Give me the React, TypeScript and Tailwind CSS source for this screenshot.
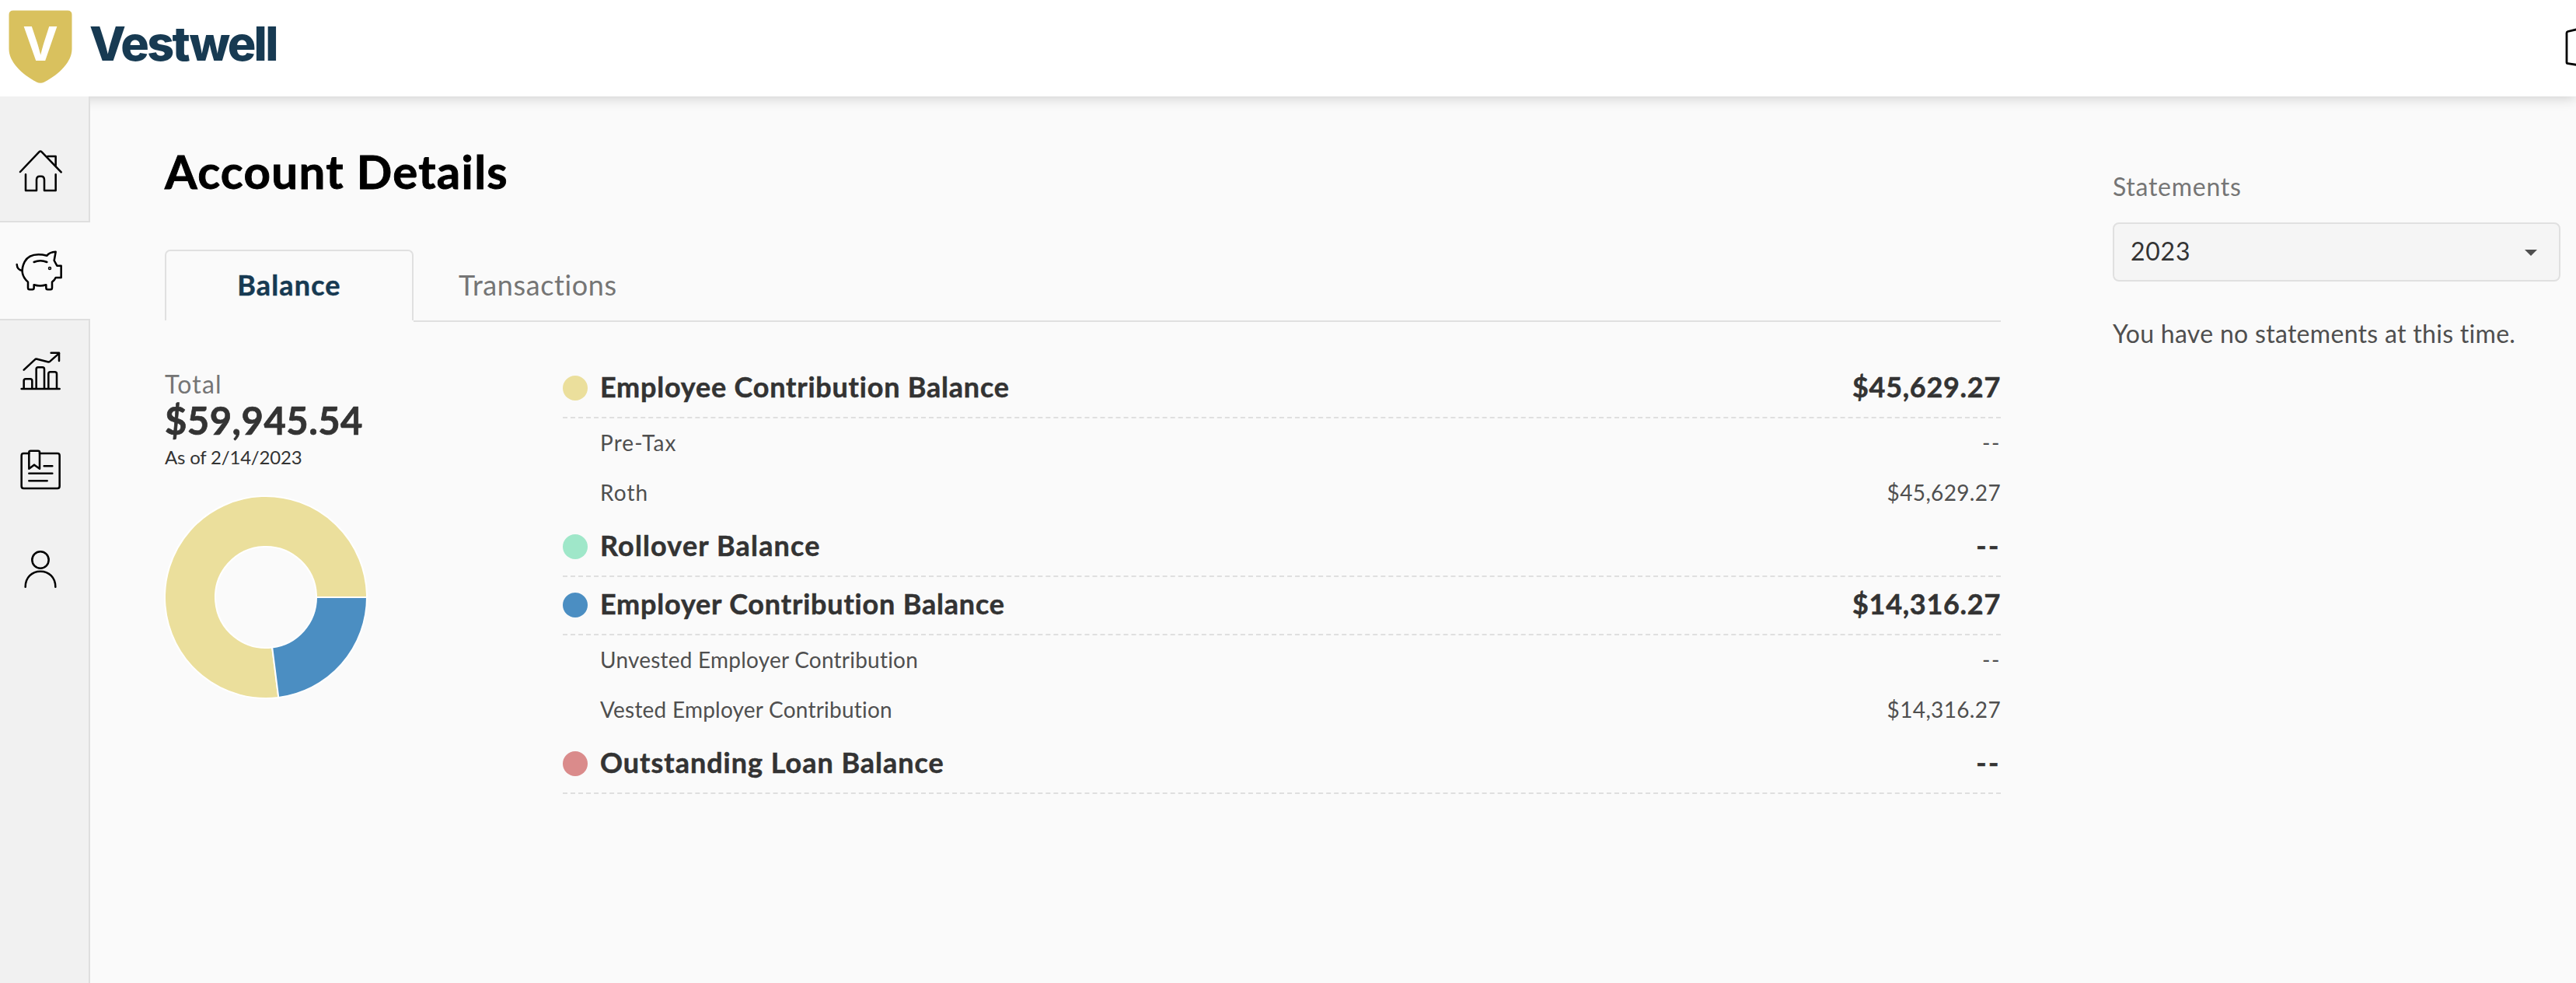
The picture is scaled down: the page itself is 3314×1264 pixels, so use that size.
import type { ReactNode } from "react";

const stroke = {
  fill: "none",
  stroke: "#000",
  strokeWidth: 7.6,
  strokeLinecap: "round" as const,
  strokeLinejoin: "round" as const,
};

function HomeIcon() {
  return (
    <svg width="56" height="56" viewBox="0 0 168 168" {...stroke}>
      <path d="M6 87 L79 10 Q84 5 89 10 L164 88" />
      <path d="M112 27 H143 V62" />
      <path d="M27 97 V159 H69 V118 Q69 104 81 104 H87 Q99 104 99 118 V159 H143 V97" />
    </svg>
  );
}

function PiggyIcon() {
  return (
    <svg width="60" height="56" viewBox="0 0 180 168" {...stroke}>
      <path d="M5 60 C6 75 12 82 26 84" />
      <path d="M155 11 C140 12 128 16 121 26 C85 18 50 22 35 50 C20 80 25 108 48 128 V150 Q48 157 54 157 H65 Q71 157 71 150 V139 Q95 146 118 139 V150 Q118 157 124 157 H135 Q141 157 141 150 V128 Q150 122 155 111 H176 V65 H160 L149 45 Z" />
      <path d="M71 51 Q96 40 121 51" />
      <circle cx="132" cy="75" r="4.5" strokeWidth="4.5" />
    </svg>
  );
}

function ChartIcon() {
  return (
    <svg width="52" height="52" viewBox="0 0 156 156" {...stroke}>
      <path d="M5 147 H152" />
      <path d="M14 146 V116 Q14 109 21 109 H39 Q46 109 46 116 V146" />
      <path d="M62 146 V71 Q62 64 69 64 H86 Q93 64 93 71 V146" />
      <path d="M109 146 V89 Q109 82 116 82 H133 Q141 82 141 89 V146" />
      <path d="M14 74 L56 35 Q60 31 65 32 L106 43 Q111 44 115 41 L150 10" />
      <path d="M119 8 H150 V39" />
    </svg>
  );
}

function StatementIcon() {
  return (
    <svg width="52" height="53" viewBox="0 0 156 159" {...stroke}>
      <path d="M34 18 H13 Q5 18 5 26 V145 Q5 153 13 153 H144 Q152 153 152 145 V26 Q152 18 144 18 H75" />
      <path d="M34 77 V14 Q34 8 40 8 H69 Q75 8 75 14 V77 L54 62 Z" />
      <path d="M92 67 H124 M34 95 H124 M34 124 H104" />
    </svg>
  );
}

function PersonIcon() {
  return (
    <svg width="44" height="52" viewBox="0 0 132 156" {...stroke}>
      <circle cx="66" cy="42" r="32" />
      <path d="M8 146 C8 110 33 86 66 86 C99 86 124 110 124 146" />
    </svg>
  );
}

function Header() {
  return (
    <header className="relative flex h-[124px] items-start justify-between bg-white shadow-[0_2px_16px_rgba(0,0,0,0.18)]">
      <div className="flex items-start pl-[11px] pt-[13px] font-['Inter',sans-serif]">
        <div className="relative flex h-[94px] w-[82px] justify-center">
          <svg className="absolute inset-0" width="82" height="94" viewBox="0 0 82 94">
            <path
              d="M6 0.5 H76 Q81.5 0.5 81.5 6 V50 C81.5 66 66 82 46 92.5 Q41 95 36 92.5 C16 82 0.5 66 0.5 50 V6 Q0.5 0.5 6 0.5 Z"
              fill="#d9c15e"
            />
          </svg>
          <span className="relative text-[61px] font-bold leading-[86px] text-white">V</span>
        </div>
        <span className="ml-[22px] text-[61px] font-extrabold leading-[86px] tracking-[-2.7px] text-[#173a52]">
          Vestwell
        </span>
      </div>
      <svg className="mt-[34px]" width="14" height="54" viewBox="0 0 14 54" fill="none" stroke="#000" strokeWidth="2.8">
        <path d="M16 3.5 L3.5 6.5 Q2 7 2 8.5 V46 Q2 47.500 3.5 47.700 L16 49.500" />
      </svg>
    </header>
  );
}

function Sidebar() {
  return (
    <nav className="relative z-10 flex w-[116px] shrink-0 flex-col bg-[#fafafa]">
      <div className="h-[162px] border-b-2 border-r-2 border-[#dfdfdf] bg-[#f1f1f1] pl-6 pt-[68px]">
        <HomeIcon />
      </div>
      <div className="h-[124px] pl-5 pt-[34px]">
        <PiggyIcon />
      </div>
      <div className="flex flex-1 flex-col border-r-2 border-t-2 border-[#dfdfdf] bg-[#f1f1f1]">
        <div className="h-[126px] pl-[26px] pt-[39px]">
          <ChartIcon />
        </div>
        <div className="h-[126px] pl-[26px] pt-[39px]">
          <StatementIcon />
        </div>
        <div className="h-[126px] pl-[30px] pt-[42px]">
          <PersonIcon />
        </div>
      </div>
    </nav>
  );
}

function Donut() {
  const c = 131;
  const R = 130;
  const r = 65;
  const a = (82.8 * Math.PI) / 180;
  const p = (q: number, t: number) => `${c + q * Math.cos(t)} ${c + q * Math.sin(t)}`;
  return (
    <svg width="262" height="262" viewBox="0 0 262 262" stroke="#fff" strokeWidth="2">
      <path
        fill="#ebdf9c"
        d={`M${p(R, a)} A${R} ${R} 0 1 1 ${p(R, 0)} L${p(r, 0)} A${r} ${r} 0 1 0 ${p(r, a)} Z`}
      />
      <path
        fill="#4b8ec2"
        d={`M${p(R, 0)} A${R} ${R} 0 0 1 ${p(R, a)} L${p(r, a)} A${r} ${r} 0 0 0 ${p(r, 0)} Z`}
      />
    </svg>
  );
}

function BalanceHeader({ dot, label, amount }: { dot: string; label: ReactNode; amount: string }) {
  return (
    <div className="flex h-[75px] items-start pt-5 text-[36px] font-bold leading-[28px] text-[#333] [-webkit-text-stroke:0.5px_#333]">
      <span className={`mr-4 size-8 rounded-full ${dot}`} />
      {label}
      <span className={amount === "--" ? "ml-auto tracking-[2.5px]" : "ml-auto tracking-[0.7px]"}>{amount}</span>
    </div>
  );
}

function DashedRule() {
  return (
    <svg className="-mt-[2px] block" width="1850" height="2">
      <line x1="0" y1="1" x2="1850" y2="1" stroke="#dfdfdf" strokeWidth="2" strokeDasharray="6 4.022" />
    </svg>
  );
}

function Detail({ label, amount }: { label: ReactNode; amount: string }) {
  return (
    <div className="flex h-16 items-center justify-between pb-[2px] pl-12 text-[28px] leading-[40px] text-[#4f4f4f]">
      {label}
      <span className={amount === "--" ? "tracking-[1.6px]" : "tracking-[0.35px]"}>{amount}</span>
    </div>
  );
}

function Balances() {
  return (
    <div className="w-[1850px] pt-[49px]">
      <BalanceHeader
        dot="bg-[#ebdf9c]"
        label={<span className="tracking-[0.78px]">Employee Contribution Balance</span>}
        amount="$45,629.27"
      />
      <DashedRule />
      <div className="h-[129px]">
        <Detail label={<span className="tracking-[1.1px]">Pre-Tax</span>} amount="--" />
        <Detail label={<span className="tracking-[1.1px]">Roth</span>} amount="$45,629.27" />
      </div>
      <BalanceHeader
        dot="bg-[#9fe7c9]"
        label={<span className="tracking-[1.15px]">Rollover Balance</span>}
        amount="--"
      />
      <DashedRule />
      <BalanceHeader
        dot="bg-[#4b8ec2]"
        label={<span className="tracking-[0.8px]">Employer Contribution Balance</span>}
        amount="$14,316.27"
      />
      <DashedRule />
      <div className="h-[129px]">
        <Detail label={<span className="tracking-[0.22px]">Unvested Employer Contribution</span>} amount="--" />
        <Detail label={<span className="tracking-[0.22px]">Vested Employer Contribution</span>} amount="$14,316.27" />
      </div>
      <BalanceHeader
        dot="bg-[#da8b8b]"
        label={<span className="tracking-[0.98px]">Outstanding Loan Balance</span>}
        amount="--"
      />
      <DashedRule />
    </div>
  );
}

export default function App() {
  return (
    <div className="flex h-[1264px] w-[3314px] flex-col overflow-hidden bg-[#fafafa] font-['Lato',sans-serif]">
      <Header />
      <div className="flex flex-1">
        <Sidebar />
        <main className="ml-24 w-[2362px] pt-14">
          <h1 className="text-[60px] font-bold leading-[80px] tracking-[1.3px] text-black [-webkit-text-stroke:0.9px_#000]">
            Account Details
          </h1>
          <div className="mt-[61px] flex h-[93px]">
            <div className="flex h-[91px] w-[320px] items-center justify-center rounded-t-[7px] border-2 border-b-0 border-[#e0e0e0] pb-[3px] text-[36px] font-bold tracking-[1.15px] text-[#173a52] [-webkit-text-stroke:0.5px_#173a52]">
              Balance
            </div>
            <div className="flex flex-1 items-center border-b-2 border-[#e0e0e0] pb-px pl-[58px] text-[36px] tracking-[0.6px] text-[#757575]">
              Transactions
            </div>
          </div>
          <div className="flex">
            <div className="w-[512px] pt-[60px]">
              <div className="text-[32px] leading-[40px] tracking-[1.2px] text-[#757575]">Total</div>
              <div className="text-[49px] font-bold leading-[52px] tracking-[0.45px] text-[#333] [-webkit-text-stroke:0.7px_#333]">
                $59,945.54
              </div>
              <div className="mt-[2px] text-[24px] leading-[40px] tracking-[-0.2px] text-[#333]">As of 2/14/2023</div>
              <div className="-ml-px mt-[29px]">
                <Donut />
              </div>
            </div>
            <Balances />
          </div>
        </main>
        <aside className="ml-36 w-[576px] pt-24 text-[32px] leading-[40px]">
          <div className="tracking-[0.73px] text-[#757575]">Statements</div>
          <div className="mt-[26px] flex h-[76px] items-center justify-between rounded-lg border-2 border-[#e0e0e0] bg-[#f5f5f5] pl-[21px] pr-7">
            <span className="pb-[3px] tracking-[0.75px] text-[#333]">2023</span>
            <svg className="mt-[2px]" width="16" height="8" viewBox="0 0 16 8">
              <path d="M0 0 H16 L8 8 Z" fill="#4f4f4f" />
            </svg>
          </div>
          <div className="mt-[47px] tracking-[0.3px] text-[#4f4f4f]">You have no statements at this time.</div>
        </aside>
      </div>
    </div>
  );
}
